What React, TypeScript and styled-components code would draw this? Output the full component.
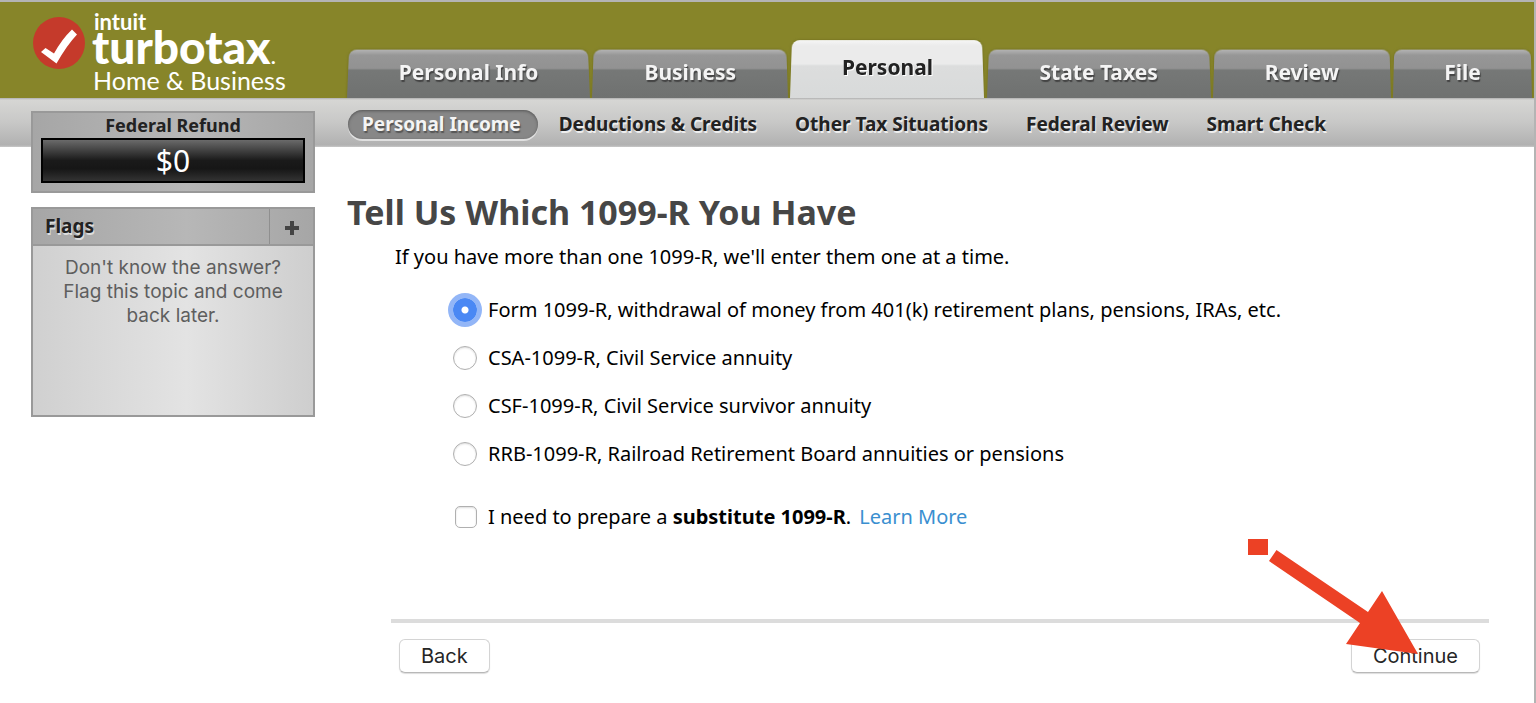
import React from "react";
import styled, { createGlobalStyle } from "styled-components";

const uiFont = `"Lucida Grande", "Noto Sans", sans-serif`;
const systemFont = `Inter, "Liberation Sans", sans-serif`;

const GlobalStyle = createGlobalStyle`
  *, *::before, *::after { box-sizing: border-box; }
  body { margin: 0; background: #fff; color: #000; font: 20px/24px ${uiFont}; }
  h1, h2, p, fieldset { margin: 0; padding: 0; border: 0; }
  button, input { font: inherit; margin: 0; }
`;

const Page = styled.div`
  display: grid;
  grid-template-columns: 347px 1fr;
  grid-template-rows: auto auto 1fr;
  min-height: 100vh;
  border-top: 2px solid #b4b4b4;
  border-right: 2px solid #b4b4b4;
`;

const Header = styled.header`
  grid-column: 1 / -1;
  grid-row: 1;
  display: grid;
  grid-template-columns: subgrid;
  grid-template-rows: 96px;
  background: #878529;
`;

const Brand = styled.div`
  display: flex;
  gap: 6px;
  padding: 10px 0 0 32px;
  color: #fff;
  font-family: Lato, sans-serif;
`;

const BrandMark = styled.svg`
  width: 54px;
  height: 54px;
  margin-top: 5px;
`;

const BrandText = styled.div`
  display: flex;
  flex-direction: column;
`;

const Company = styled.span`
  padding-left: 2px;
  font-size: 22px;
  line-height: 20px;
  font-weight: 700;
`;

const Product = styled.span`
  font-size: 46px;
  line-height: 30px;
  font-weight: 900;
  white-space: nowrap;

  small { font-size: 24px; font-weight: 400; }
`;

const Edition = styled.span`
  padding-left: 1px;
  font-size: 25px;
  line-height: 20px;
  white-space: nowrap;
`;

const Tabs = styled.nav`
  display: flex;
  align-items: flex-end;
  gap: 2px;
  padding-right: 2px;
`;

const Tab = styled.a<{ $grow: number; $active?: boolean }>`
  flex: ${(p) => p.$grow} 1 0;
  position: relative;
  z-index: 0;
  display: flex;
  justify-content: center;
  height: ${(p) => (p.$active ? 58 : 48)}px;
  padding-top: ${(p) => (p.$active ? 15 : 10)}px;
  color: ${(p) => (p.$active ? "#222" : "#f4f4f4")};
  font-size: 21px;
  font-weight: 700;
  text-decoration: none;
  text-shadow: ${(p) => (p.$active ? "1px 1px 0 #fff" : "1px 2px 1px #444")};

  &::before {
    content: "";
    position: absolute;
    z-index: -1;
    inset: -2px 0 0;
    border-radius: 8px 8px 0 0;
    background: ${(p) =>
      p.$active
        ? "linear-gradient(#f6f6f6, #ebebeb 6px, #ebebeb 25px, #dcdddd 27px, #d8dada)"
        : "linear-gradient(#b4b4b4, #969696 6px, #929292 20px, #767877 21px, #6f7170)"};
    box-shadow: 0 0 3px #6b6a1c;
    clip-path: inset(-4px -4px 0);
    transform: perspective(500px) rotateX(10deg);
    transform-origin: bottom;
  }
`;

const SubNav = styled.nav`
  grid-column: 1 / -1;
  grid-row: 2;
  display: flex;
  align-items: center;
  gap: 7px;
  height: 49px;
  padding: 3px 0 0 348px;
  background: linear-gradient(#b0b0b0, #d6d6d4 2px, #c8c8c7 24px, #b1b1b1 47px, #c8c8c8);
`;

const SubLink = styled.a<{ $active?: boolean }>`
  padding: 2px 17px 3px 14px;
  border-radius: 15px;
  color: ${(p) => (p.$active ? "#f4f4f4" : "#222")};
  font-size: 19px;
  font-weight: 700;
  text-decoration: none;
  white-space: nowrap;
  text-shadow: ${(p) => (p.$active ? "1px 2px 1px #555" : "1px 2px 0 #eee")};
  background: ${(p) => (p.$active ? "#878787" : "none")};
  box-shadow: ${(p) => (p.$active ? "inset 0 1px 3px #555, 0 2px 0 #e0e0e0" : "none")};
`;

const Sidebar = styled.aside`
  grid-column: 1;
  grid-row: 2 / 4;
  display: flex;
  flex-direction: column;
  gap: 14px;
  padding: 13px 32px 0 31px;
`;

const Panel = styled.section`
  border: 2px solid #999;
  background: linear-gradient(90deg, #a6a6a6, #b7b7b7 55%, #a6a6a6);
`;

const RefundPanel = styled(Panel)`
  padding: 0 8px 8px;
  text-align: center;
`;

const RefundTitle = styled.h2`
  color: #222;
  font-size: 18px;
  line-height: 25px;
`;

const RefundAmount = styled.div`
  border: 2px solid #000;
  background: linear-gradient(#6a6a6a, #1a1a1a 50%, #161616 70%, #333);
  color: #fff;
  font-size: 30px;
  line-height: 41px;
`;

const FlagsHeader = styled.div`
  display: flex;
  height: 37px;
  border-bottom: 2px solid #999;
`;

const FlagsTitle = styled.h2`
  flex: 1;
  padding-left: 12px;
  color: #222;
  font-size: 19px;
  line-height: 34px;
  text-shadow: 1px 2px 0 #ddd;
`;

const AddFlag = styled.button`
  display: grid;
  place-items: center;
  width: 44px;
  padding: 3px 0 0;
  border: 0;
  border-left: 1px solid #8f8f8f;
  background: none;
`;

const FlagsBody = styled.p`
  min-height: 169px;
  padding: 10px 24px;
  background: linear-gradient(90deg, #d0d0d0, #e3e3e3 55%, #cecece);
  color: #5e5e5e;
  font: 19px/24px ${systemFont};
  text-align: center;
`;

const Main = styled.main`
  grid-column: 2;
  grid-row: 3;
  padding: 45px 45px 29px 0;
`;

const Title = styled.h1`
  color: #464646;
  font-size: 34px;
  line-height: 40px;
`;

const Form = styled.form`
  padding-left: 44px;
`;

const Intro = styled.p`
  padding: 13px 0 0 4px;
`;

const Choices = styled.fieldset`
  display: flex;
  flex-direction: column;
  gap: 24px;
  padding: 29px 0 0 62px;
`;

const Choice = styled.label`
  display: flex;
  align-items: center;
  gap: 11px;
`;

const Radio = styled.input`
  appearance: none;
  width: 24px;
  height: 24px;
  border: 1px solid #b0b0b0;
  border-radius: 50%;
  background: #fff;
  box-shadow: inset 0 1px 2px #ddd;

  &:checked {
    border: 0;
    background: radial-gradient(circle, #fff 3px, #4a88f4 4px);
    box-shadow: 0 0 0 5px #93b6f7;
  }
`;

const SubstituteRow = styled.div`
  display: flex;
  align-items: center;
  gap: 8px;
  padding: 39px 0 90px 64px;
`;

const SubstituteLabel = styled.label`
  display: flex;
  align-items: center;
  gap: 11px;
`;

const Checkbox = styled.input`
  appearance: none;
  width: 22px;
  height: 22px;
  border: 1px solid #b0b0b0;
  border-radius: 5px;
  background: #fff;
  box-shadow: inset 0 1px 2px #ddd;
`;

const TextLink = styled.a`
  color: #3a8fd0;
  text-decoration: none;
`;

const Actions = styled.div`
  display: flex;
  justify-content: space-between;
  padding: 16px 9px 0 8px;
  border-top: 4px solid #dcdcdc;
`;

const ActionButton = styled.button`
  height: 34px;
  padding: 0 21px;
  border: 1px solid #d4d4d4;
  border-bottom-color: #b8b8b8;
  border-radius: 6px;
  background: #fff;
  box-shadow: 0 1px 1px #ddd;
  color: #262626;
  font: 20px/32px ${systemFont};
`;

const Pointed = styled.div`
  position: relative;
`;

const Arrow = styled.svg`
  position: absolute;
  right: 50px;
  bottom: 13px;
  width: 190px;
  height: 130px;
  pointer-events: none;
`;

const tabs = [
  { label: "Personal Info", grow: 243 },
  { label: "Business", grow: 196 },
  { label: "Personal", grow: 194, active: true },
  { label: "State Taxes", grow: 224 },
  { label: "Review", grow: 178 },
  { label: "File", grow: 139 },
];

const subLinks = ["Personal Income", "Deductions & Credits", "Other Tax Situations", "Federal Review", "Smart Check"];

const forms = [
  "Form 1099-R, withdrawal of money from 401(k) retirement plans, pensions, IRAs, etc.",
  "CSA-1099-R, Civil Service annuity",
  "CSF-1099-R, Civil Service survivor annuity",
  "RRB-1099-R, Railroad Retirement Board annuities or pensions",
];

export default function App() {
  return (
    <>
      <GlobalStyle />
      <Page>
        <Header>
          <Brand>
            <BrandMark viewBox="0 0 54 54" aria-hidden="true">
              <circle cx="27" cy="26" r="26" fill="#c53a2b" />
              <path d="M9 35L13.500 31L22 36.500Q30 22 40 12.500L45 17.500Q35 28 24.500 46.500Z" fill="#fff" />
            </BrandMark>
            <BrandText>
              <Company>intuit</Company>
              <Product>turbotax<small>.</small></Product>
              <Edition>Home &amp; Business</Edition>
            </BrandText>
          </Brand>
          <Tabs aria-label="Sections">
            {tabs.map((t) => (
              <Tab key={t.label} href="#" $grow={t.grow} $active={t.active}>
                {t.label}
              </Tab>
            ))}
          </Tabs>
        </Header>

        <SubNav aria-label="Personal">
          {subLinks.map((label, i) => (
            <SubLink key={label} href="#" $active={i === 0}>
              {label}
            </SubLink>
          ))}
        </SubNav>

        <Sidebar>
          <RefundPanel>
            <RefundTitle>Federal Refund</RefundTitle>
            <RefundAmount>$0</RefundAmount>
          </RefundPanel>
          <Panel>
            <FlagsHeader>
              <FlagsTitle>Flags</FlagsTitle>
              <AddFlag type="button" aria-label="Add flag">
                <svg width="16" height="16" viewBox="0 0 16 16">
                  <path d="M8 1V15M1 8H15" stroke="#444" strokeWidth="4" />
                </svg>
              </AddFlag>
            </FlagsHeader>
            <FlagsBody>Don't know the answer? Flag this topic and come back later.</FlagsBody>
          </Panel>
        </Sidebar>

        <Main>
          <Title>Tell Us Which 1099-R You Have</Title>
          <Form>
            <Intro>If you have more than one 1099-R, we'll enter them one at a time.</Intro>
            <Choices aria-label="1099-R type">
              {forms.map((label, i) => (
                <Choice key={label}>
                  <Radio type="radio" name="form" defaultChecked={i === 0} />
                  {label}
                </Choice>
              ))}
            </Choices>
            <SubstituteRow>
              <SubstituteLabel>
                <Checkbox type="checkbox" />
                <span>
                  I need to prepare a <b>substitute 1099-R</b>.
                </span>
              </SubstituteLabel>
              <TextLink href="#">Learn More</TextLink>
            </SubstituteRow>
            <Actions>
              <ActionButton type="button">Back</ActionButton>
              <Pointed>
                <ActionButton type="button">Continue</ActionButton>
                <Arrow viewBox="1240 530 190 130" fill="#ec4125" aria-hidden="true">
                  <path d="M1248 539H1268V555H1248Z" />
                  <path d="M1276.500 550L1368 612L1382 591L1418 654L1346 644L1360 623L1269 561Z" />
                </Arrow>
              </Pointed>
            </Actions>
          </Form>
        </Main>
      </Page>
    </>
  );
}
